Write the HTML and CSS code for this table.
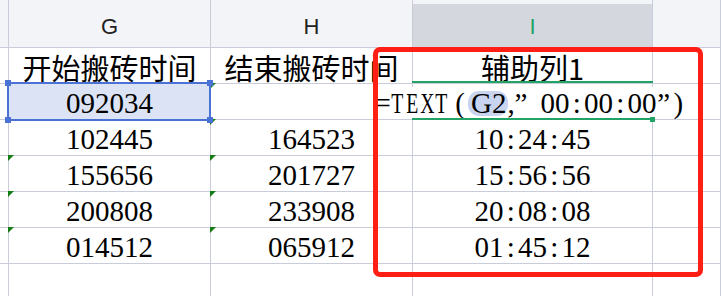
FILE: index.html
```html
<!DOCTYPE html>
<html lang="zh-CN">
<head>
<meta charset="utf-8">
<title>Sheet</title>
<link rel="stylesheet" href="styles.css">
</head>
<body>
<div class="wrap">
  <div class="sheet">
    <div class="hd corner"></div>
    <div class="hd">G</div>
    <div class="hd">H</div>
    <div class="hd hd-active">I</div>
    <div class="hd"></div>

    <div class="rh"></div>
    <div class="c cjk">开始搬砖时间</div>
    <div class="c cjk">结束搬砖时间</div>
    <div class="c cjk">辅助列1</div>
    <div class="c"></div>

    <div class="rh"></div>
    <div class="c sel">092034</div>
    <div class="c tri"></div>
    <div class="c edit">
      <span class="fx"><span class="ch eq">=</span><span class="ch lt">T</span><span class="ch lt">E</span><span class="ch lt">X</span><span class="ch lt">T</span><span class="paren">(</span><span class="ref">G2</span><span class="comma">,</span><span class="fw">”</span>00<span class="ch">:</span>00<span class="ch">:</span>00<span class="ch">”</span><span class="ch">)</span></span>
    </div>
    <div class="c"></div>

    <div class="rh"></div>
    <div class="c">102445</div>
    <div class="c tri">164523</div>
    <div class="c">10<span class="ch">:</span>24<span class="ch">:</span>45</div>
    <div class="c"></div>

    <div class="rh"></div>
    <div class="c tri">155656</div>
    <div class="c tri">201727</div>
    <div class="c">15<span class="ch">:</span>56<span class="ch">:</span>56</div>
    <div class="c"></div>

    <div class="rh"></div>
    <div class="c tri">200808</div>
    <div class="c tri">233908</div>
    <div class="c">20<span class="ch">:</span>08<span class="ch">:</span>08</div>
    <div class="c"></div>

    <div class="rh"></div>
    <div class="c tri">014512</div>
    <div class="c tri">065912</div>
    <div class="c">01<span class="ch">:</span>45<span class="ch">:</span>12</div>
    <div class="c"></div>

    <div class="rh"></div>
    <div class="c"></div>
    <div class="c"></div>
    <div class="c"></div>
    <div class="c"></div>
  </div>

  <div class="selbox">
    <span class="hdl tl"></span><span class="hdl tr"></span>
    <span class="hdl bl"></span><span class="hdl br"></span>
  </div>
  <div class="activebox"><span class="fill"></span></div>
  <div class="redbox"></div>
</div>
</body>
</html>
```

FILE: styles.css
```css
* { box-sizing: border-box; }
html, body {
  margin: 0;
  padding: 0;
  background: #ffffff;
  overflow: hidden;
}
.wrap {
  position: relative;
  width: 721px;
  height: 296px;
  overflow: hidden;
}
.sheet {
  display: grid;
  grid-template-columns: 9px 202px 202px 240px 1fr;
  grid-template-rows: 48px repeat(7, 36px);
}
.sheet > div {
  border-right: 1px solid #c8cdd9;
  border-bottom: 1px solid #c8cdd9;
  position: relative;
}
.hd {
  background: #f3f4f7;
  font-family: "Liberation Sans", Arial, sans-serif;
  font-size: 22px;
  line-height: 22px;
  padding-top: 16px;
  color: #222;
  text-align: center;
}
.hd-active {
  background: linear-gradient(#f3f4f7 0 4px, #d4d7de 4px);
  color: #21a366;
}
.rh { background: #ffffff; }
.c {
  display: flex;
  justify-content: center;
  white-space: nowrap;
  font-family: "Liberation Serif", "Noto Sans CJK SC", serif;
  font-size: 29px;
  line-height: 32px;
  padding-top: 3px;
  color: #000;
}
.cjk {
  font-family: "Noto Sans CJK SC", "Liberation Serif", sans-serif;
}
.sel { background: #dce3f4; }
.ch {
  display: inline-block;
  width: 14.5px;
  text-align: center;
}
.lt { transform: scaleX(0.68); }
.edit { z-index: 2; }
.fx {
  display: inline-flex;
  align-items: baseline;
  background: #fff;
  height: 32px;
  margin-right: 5px;
}
.paren {
  display: inline-block;
  width: 18px;
  text-align: right;
}
.ref {
  display: inline-block;
  background: #c9d5f0;
  border-radius: 11px;
  padding: 0 2px 0 3px;
  line-height: 25px;
  margin-left: 3px;
}
.comma {
  display: inline-block;
  width: 7px;
  margin-left: -1px;
  text-align: left;
}
.fw {
  display: inline-block;
  width: 26px;
  text-align: left;
}
.tri::before {
  content: "";
  position: absolute;
  left: -1px;
  top: -1px;
  border-top: 6px solid #137d13;
  border-right: 6px solid transparent;
}
.selbox {
  position: absolute;
  left: 7px;
  top: 82px;
  width: 204px;
  height: 39px;
  border: 2px solid #4a72d4;
  z-index: 3;
}
.hdl {
  position: absolute;
  width: 6px;
  height: 6px;
  background: #4a72d4;
}
.tl { left: -4px; top: -4px; }
.tr { right: -4px; top: -4px; }
.bl { left: -4px; bottom: -4px; }
.br { right: -4px; bottom: -4px; }
.activebox {
  position: absolute;
  left: 412px;
  top: 81px;
  width: 241px;
  height: 39px;
  border-top: 2px solid #21a366;
  border-bottom: 2px solid #21a366;
  z-index: 3;
}
.fill {
  position: absolute;
  right: -2px;
  bottom: -4px;
  width: 5px;
  height: 5px;
  background: #21a366;
}
.redbox {
  position: absolute;
  left: 373px;
  top: 47px;
  width: 330px;
  height: 230px;
  border: 5px solid #ff1f14;
  border-radius: 7px;
  z-index: 4;
}
```
